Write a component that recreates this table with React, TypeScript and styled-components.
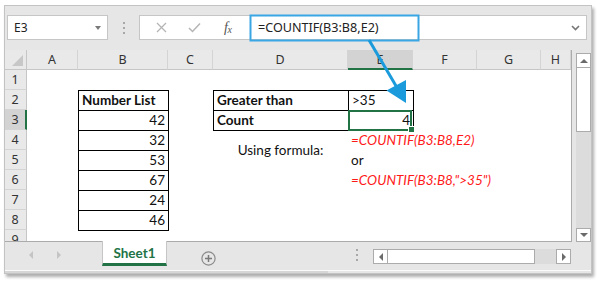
import React from "react";
import styled, { createGlobalStyle, css } from "styled-components";

const GlobalStyle = createGlobalStyle`
  html, body { margin: 0; padding: 0; background: #ffffff; }
  body { font-family: "Noto Sans", sans-serif; }
  * { box-sizing: border-box; }
`;

const GREEN = "#217346";
const UI_FONT = `"Noto Sans", "DejaVu Sans", sans-serif`;
const CELL_FONT = `Lato, "Liberation Sans", sans-serif`;

const Stage = styled.div`
  position: relative;
  width: 602px;
  height: 286px;
  padding: 5px 0 0 4px;
  overflow: hidden;
`;

const Window = styled.div`
  width: 588px;
  height: 269px;
  border: 1px solid #c3c3c3;
  background: #e6e6e6;
  box-shadow: 2px 3px 3px rgba(0, 0, 0, 0.32);
  display: flex;
  flex-direction: column;
  font-family: ${UI_FONT};
`;

/* ---------- formula toolbar ---------- */
const Toolbar = styled.div`
  display: flex;
  height: 25px;
  margin: 9px 4px 0 2px;
`;

const NameBox = styled.div`
  width: 101px;
  background: #fff;
  border: 1px solid #c6c6c6;
  display: flex;
  align-items: center;
  justify-content: space-between;
  padding: 0 6px 0 6px;
  font-size: 12px;
  color: #222;
`;

const DropTri = styled.span`
  width: 0;
  height: 0;
  border-left: 3.5px solid transparent;
  border-right: 3.5px solid transparent;
  border-top: 4px solid #7a7a7a;
  margin-top: 1px;
`;

const Grip = styled.div<{ $w: number; $h?: number }>`
  width: ${(p) => p.$w}px;
  ${(p) => p.$h && `height: ${p.$h}px;`}
  display: flex;
  flex-direction: column;
  align-items: center;
  justify-content: center;
  gap: 3px;
  & > i {
    display: block;
    width: 2px;
    height: 2px;
    background: #a8a8a8;
  }
`;

const FxButtons = styled.div`
  width: 111px;
  background: #fff;
  border: 1px solid #c6c6c6;
  border-right: none;
  display: flex;
  align-items: center;
  padding-left: 14px;
`;

const FxBtn = styled.span<{ $w: number }>`
  width: ${(p) => p.$w}px;
  display: flex;
  align-items: center;
  justify-content: center;
`;

const FxLabel = styled.span`
  font-family: "Liberation Serif", "DejaVu Serif", serif;
  font-style: italic;
  font-size: 14px;
  color: #555;
  letter-spacing: -0.5px;
  & > sub {
    font-size: 10px;
    vertical-align: baseline;
    position: relative;
    top: 1px;
  }
`;

const FormulaInput = styled.div`
  flex: 1;
  background: #fff;
  border: 1px solid #c6c6c6;
  display: flex;
  align-items: center;
  justify-content: space-between;
  padding: 0 6px 0 7px;
  font-size: 12.6px;
  color: #222;
`;

/* ---------- sheet ---------- */
const Main = styled.div`
  display: flex;
  margin-top: 10px;
  height: 192px;
`;

const Sheet = styled.div`
  width: 567px;
  height: 192px;
  border-right: 1px solid #ababab;
  border-bottom: 1px solid #ababab;
  display: grid;
  grid-template-columns: 22px 51px 90px 45px 135px 65px 64px 64px 30px;
  grid-auto-rows: 20px;
  background: #fff;
  overflow: hidden;
`;

const Corner = styled.div`
  background: #e9e9e9;
  border-right: 1px solid #c6c6c6;
  border-bottom: 1px solid #c6c6c6;
  position: relative;
  &::after {
    content: "";
    position: absolute;
    right: 3px;
    bottom: 3px;
    width: 0;
    height: 0;
    border-left: 11px solid transparent;
    border-bottom: 11px solid #c7c7c7;
  }
`;

const ColHead = styled.div<{ $active?: boolean }>`
  background: ${(p) => (p.$active ? "#d3d3d3" : "#e9e9e9")};
  border-right: 1px solid #d4d4d4;
  border-bottom: ${(p) => (p.$active ? `2px solid ${GREEN}` : "1px solid #c6c6c6")};
  display: flex;
  align-items: center;
  justify-content: center;
  font-size: 12.5px;
  color: #333;
  padding-top: ${(p) => (p.$active ? "1px" : "0")};
  overflow: hidden;
  white-space: nowrap;
`;

const RowHead = styled.div<{ $active?: boolean }>`
  background: ${(p) => (p.$active ? "#d3d3d3" : "#e9e9e9")};
  border-bottom: 1px solid #d4d4d4;
  border-right: ${(p) => (p.$active ? `2px solid ${GREEN}` : "1px solid #c6c6c6")};
  display: flex;
  align-items: center;
  justify-content: center;
  padding-right: ${(p) => (p.$active ? "0" : "1px")};
  font-size: 12.5px;
  color: #333;
`;

type Align = "left" | "right" | "center";

const Cell = styled.div<{
  $box?: boolean;
  $align?: Align;
  $bold?: boolean;
  $red?: boolean;
  $italic?: boolean;
  $selected?: boolean;
  $span?: number;
  $middle?: boolean;
}>`
  position: relative;
  display: flex;
  align-items: ${(p) => (p.$middle ? "center" : "flex-end")};
  justify-content: ${(p) =>
    p.$align === "right" ? "flex-end" : p.$align === "center" ? "center" : "flex-start"};
  padding: 0 3px 1px 3px;
  font-family: ${CELL_FONT};
  font-size: 13.5px;
  line-height: 18px;
  white-space: nowrap;
  color: ${(p) => (p.$red ? "#ff1a1a" : "#111")};
  font-weight: ${(p) => (p.$bold ? 700 : 400)};
  font-style: ${(p) => (p.$italic ? "italic" : "normal")};
  ${(p) => p.$span && css`grid-row: span ${p.$span};`}
  ${(p) =>
    p.$box &&
    css`
      border: 1px solid #000;
      margin: 0 -1px -1px 0;
    `}
  ${(p) =>
    p.$selected &&
    css`
      z-index: 2;
      &::before {
        content: "";
        position: absolute;
        top: -1px;
        left: -1px;
        right: 1px;
        bottom: -1px;
        border: 2px solid ${GREEN};
      }
      &::after {
        content: "";
        position: absolute;
        right: -1px;
        bottom: -2px;
        width: 5px;
        height: 5px;
        background: ${GREEN};
        outline: 1px solid #fff;
      }
    `}
`;

const VScroll = styled.div`
  width: 15px;
  margin: 3px 0 0 4px;
  display: flex;
  flex-direction: column;
  background: #dcdcdc;
`;

const ScrollBtn = styled.div<{ $w?: number; $h?: number }>`
  width: ${(p) => (p.$w ? `${p.$w}px` : "auto")};
  height: ${(p) => (p.$h ? `${p.$h}px` : "auto")};
  background: #fff;
  border: 1px solid #ababab;
  display: flex;
  align-items: center;
  justify-content: center;
  flex-shrink: 0;
`;

const Thumb = styled.div<{ $len: number; $vertical?: boolean }>`
  ${(p) => (p.$vertical ? `height: ${p.$len}px;` : `width: ${p.$len}px;`)}
  background: #fff;
  border: 1px solid #ababab;
  ${(p) => (p.$vertical ? "border-top: none;" : "border-left: none;")}
  flex-shrink: 0;
`;

const Track = styled.div`
  flex: 1;
`;

const Tri = styled.span<{ $dir: "up" | "down" | "left" | "right"; $color?: string; $size?: number }>`
  width: 0;
  height: 0;
  ${(p) => {
    const c = p.$color || "#6b6b6b";
    const s = p.$size || 3.5;
    switch (p.$dir) {
      case "up":
        return `border-left:${s}px solid transparent;border-right:${s}px solid transparent;border-bottom:${s}px solid ${c};`;
      case "down":
        return `border-left:${s}px solid transparent;border-right:${s}px solid transparent;border-top:${s}px solid ${c};`;
      case "left":
        return `border-top:${s}px solid transparent;border-bottom:${s}px solid transparent;border-right:${s}px solid ${c};`;
      default:
        return `border-top:${s}px solid transparent;border-bottom:${s}px solid transparent;border-left:${s}px solid ${c};`;
    }
  }}
`;

/* ---------- tab bar ---------- */
const TabBar = styled.div`
  height: 28px;
  display: flex;
  align-items: flex-start;
`;

const NavArrows = styled.div`
  width: 97px;
  height: 26px;
  display: flex;
  align-items: center;
  padding-left: 24px;
  gap: 24px;
`;

const SheetTab = styled.div`
  width: 65px;
  height: 25px;
  margin-top: -1px;
  background: #fff;
  border-left: 1px solid #c6c6c6;
  border-right: 1px solid #c6c6c6;
  border-bottom: 3px solid ${GREEN};
  display: flex;
  align-items: center;
  justify-content: center;
  font-family: ${CELL_FONT};
  font-weight: 700;
  font-size: 13.5px;
  color: ${GREEN};
  padding-top: 1px;
`;

const PlusBtn = styled.div`
  margin: 7px 0 0 34px;
  width: 15px;
  height: 15px;
`;

const Spacer = styled.div<{ $w?: number }>`
  flex: ${(p) => (p.$w ? `0 0 ${p.$w}px` : "1")};
`;

const HScroll = styled.div`
  width: 198px;
  height: 15px;
  margin: 7px 20px 0 0;
  display: flex;
  background: #dcdcdc;
`;

const StatusStrip = styled.div`
  flex: 1;
  display: flex;
  border-top: 1px solid #fafafa;
  & > span {
    width: 323px;
    background: #d6d6d6;
  }
`;

const Overlay = styled.svg`
  position: absolute;
  left: 0;
  top: 0;
  pointer-events: none;
`;

type CellDef = {
  text?: string;
  box?: boolean;
  align?: Align;
  bold?: boolean;
  red?: boolean;
  italic?: boolean;
  selected?: boolean;
  span?: number;
  middle?: boolean;
  skip?: boolean;
};

const COLS = ["A", "B", "C", "D", "E", "F", "G", "H"];
const ROWS = [1, 2, 3, 4, 5, 6, 7, 8, 9];

const numbers = [42, 32, 53, 67, 24, 46];

const cells: Record<string, CellDef> = {
  B2: { text: "Number List", box: true, bold: true },
  D2: { text: "Greater than", box: true, bold: true },
  E2: { text: ">35", box: true },
  D3: { text: "Count", box: true, bold: true },
  E3: { text: "4", box: true, align: "right", selected: true },
  D4: { text: "Using formula:", align: "center", span: 2, middle: true },
  D5: { skip: true },
  E4: { text: "=COUNTIF(B3:B8,E2)", red: true, italic: true },
  E5: { text: "or" },
  E6: { text: '=COUNTIF(B3:B8,">35")', red: true, italic: true },
};
numbers.forEach((n, i) => {
  cells[`B${i + 3}`] = { text: String(n), box: true, align: "right" };
});

function Grid() {
  const items: React.ReactNode[] = [<Corner key="corner" />];
  COLS.forEach((c) => items.push(<ColHead key={`h${c}`} $active={c === "E"}>{c}</ColHead>));
  ROWS.forEach((r) => {
    items.push(
      <RowHead key={`r${r}`} $active={r === 3}>
        {r}
      </RowHead>
    );
    COLS.forEach((c) => {
      const def = cells[`${c}${r}`];
      if (def?.skip) return;
      items.push(
        <Cell
          key={`${c}${r}`}
          $box={def?.box}
          $align={def?.align}
          $bold={def?.bold}
          $red={def?.red}
          $italic={def?.italic}
          $selected={def?.selected}
          $span={def?.span}
          $middle={def?.middle}
        >
          {def?.text}
        </Cell>
      );
    });
  });
  return <Sheet>{items}</Sheet>;
}

export default function App() {
  return (
    <>
      <GlobalStyle />
      <Stage>
        <Window>
          <Toolbar>
            <NameBox>
              <span>E3</span>
              <DropTri />
            </NameBox>
            <Grip $w={31}>
              <i />
              <i />
              <i />
            </Grip>
            <FxButtons>
              <FxBtn $w={14}>
                <svg width="11" height="11" viewBox="0 0 11 11">
                  <path d="M1 1 L10 10 M10 1 L1 10" stroke="#b5b5b5" strokeWidth="1.3" fill="none" />
                </svg>
              </FxBtn>
              <FxBtn $w={19} />
              <FxBtn $w={14}>
                <svg width="13" height="11" viewBox="0 0 13 11">
                  <path d="M1 6 L4.5 9.5 L12 1.5" stroke="#b5b5b5" strokeWidth="1.5" fill="none" />
                </svg>
              </FxBtn>
              <FxBtn $w={23} />
              <FxLabel>
                f<sub>x</sub>
              </FxLabel>
            </FxButtons>
            <FormulaInput>
              <span>=COUNTIF(B3:B8,E2)</span>
              <svg width="9" height="6" viewBox="0 0 9 6">
                <path d="M1 1 L4.5 4.5 L8 1" stroke="#777" strokeWidth="1.6" fill="none" />
              </svg>
            </FormulaInput>
          </Toolbar>
          <Main>
            <Grid />
            <VScroll>
              <ScrollBtn $h={15}>
                <Tri $dir="up" $size={4} />
              </ScrollBtn>
              <Thumb $vertical $len={64} />
              <Track />
              <ScrollBtn $h={14}>
                <Tri $dir="down" $size={4} />
              </ScrollBtn>
            </VScroll>
          </Main>
          <TabBar>
            <NavArrows>
              <Tri $dir="left" $color="#c4c4c4" $size={4} />
              <Tri $dir="right" $color="#c4c4c4" $size={4} />
            </NavArrows>
            <SheetTab>Sheet1</SheetTab>
            <PlusBtn>
              <svg width="15" height="15" viewBox="0 0 15 15">
                <circle cx="7.5" cy="7.5" r="6.6" stroke="#8a8a8a" strokeWidth="1.2" fill="none" />
                <path d="M7.5 4 V11 M4 7.5 H11" stroke="#7a7a7a" strokeWidth="1.5" />
              </svg>
            </PlusBtn>
            <Spacer />
            <Grip $w={14} $h={26}>
              <i />
              <i />
              <i />
            </Grip>
            <Spacer $w={9} />
            <HScroll>
              <ScrollBtn $w={15}>
                <Tri $dir="left" $size={4} />
              </ScrollBtn>
              <Thumb $len={147} />
              <Track />
              <ScrollBtn $w={15}>
                <Tri $dir="right" $size={4} />
              </ScrollBtn>
            </HScroll>
          </TabBar>
          <StatusStrip>
            <span />
          </StatusStrip>
        </Window>
        <Overlay width="602" height="286" viewBox="0 0 602 286">
          <rect x="250.5" y="15.5" width="168" height="25" fill="none" stroke="#3aa6e4" strokeWidth="2" />
          <line x1="369" y1="40" x2="399" y2="91" stroke="#1b9bdb" strokeWidth="3" />
          <polygon points="406,103 386.5,90.5 406,80" fill="#1b9bdb" />
        </Overlay>
      </Stage>
    </>
  );
}
